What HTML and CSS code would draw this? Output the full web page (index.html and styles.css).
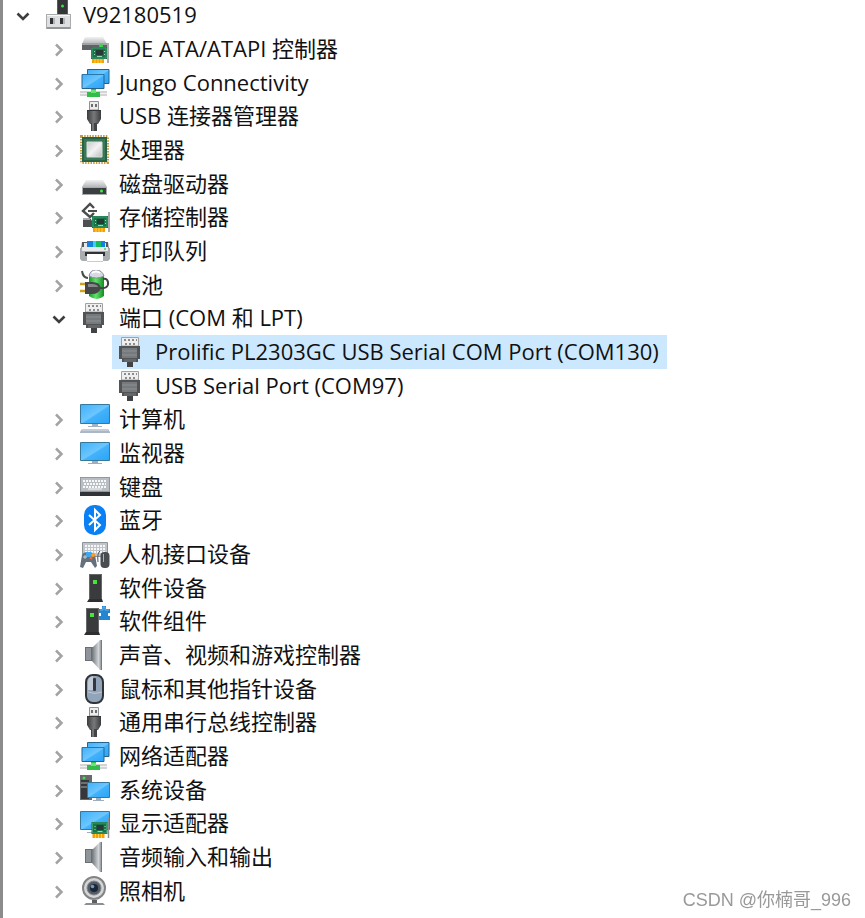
FILE: index.html
```html
<!DOCTYPE html>
<html lang="zh-CN">
<head>
<meta charset="utf-8">
<meta name="viewport" content="width=device-width, initial-scale=1">
<title>设备管理器</title>
<link rel="stylesheet" href="styles.css">
</head>
<body>
<svg class="defs" aria-hidden="true">
  <defs>
    <linearGradient id="blue" x1="0" y1="0" x2="1" y2="1"><stop offset="0" stop-color="#3fb0fa"/><stop offset=".5" stop-color="#6cc6ff"/><stop offset=".55" stop-color="#43b2fb"/><stop offset="1" stop-color="#2ba4f7"/></linearGradient>
    <linearGradient id="silver" x1="0" y1="0" x2="0" y2="1"><stop offset="0" stop-color="#f2f2f3"/><stop offset="1" stop-color="#b4b6b9"/></linearGradient>
    <linearGradient id="steel" x1="0" y1="0" x2="1" y2="0"><stop offset="0" stop-color="#70757a"/><stop offset=".65" stop-color="#d2d5d8"/><stop offset="1" stop-color="#7f858a"/></linearGradient>
    <linearGradient id="chip" x1="0" y1="0" x2="1" y2="1"><stop offset="0" stop-color="#c9c9c9"/><stop offset=".5" stop-color="#f3f3f3"/><stop offset="1" stop-color="#bdbdbd"/></linearGradient>
    <linearGradient id="dark" x1="0" y1="0" x2="1" y2="0"><stop offset="0" stop-color="#3b3c3d"/><stop offset=".5" stop-color="#77797a"/><stop offset="1" stop-color="#3b3c3d"/></linearGradient>
    <linearGradient id="cell" x1="0" y1="0" x2="1" y2="0"><stop offset="0" stop-color="#169529"/><stop offset=".45" stop-color="#62e36b"/><stop offset="1" stop-color="#138b24"/></linearGradient>
  </defs>
  <symbol id="open" viewBox="0 0 14 14"><path d="M1.500 4.500 7 10 12.500 4.500" fill="none" stroke="#3e3e3e" stroke-width="2.600"/></symbol>
  <symbol id="closed" viewBox="0 0 14 14"><path d="M4 1.500 9.500 7 4 12.500" fill="none" stroke="#a3a3a3" stroke-width="2.500"/></symbol>

  <symbol id="card" viewBox="0 0 18 20">
    <path d="M1 16h12v4H1z" fill="#f5a100"/><path d="M4 16v4M7 16v4M10 16v4" stroke="#ffd24c"/>
    <path d="M0 4h16v12H0z" fill="#19744a"/><path d="M1 5h14v10H1z" fill="none" stroke="#3d9a6c"/>
    <path d="M5 7h7v5H5z" fill="#263b35"/><path d="M3 8h1v1H3zM3 11h1v1H3zM13 8h1v1h-1zM13 11h1v1h-1zM6 13h5v1H6z" fill="#9ed7b4"/>
    <path d="M17 0v20" stroke="#8d9092" stroke-width="1.500"/>
  </symbol>
  <symbol id="root" viewBox="0 0 30 30">
    <path d="M13 0h11v15H13z" fill="#333536"/><path d="M13 0h1v15h-1zM23 0h1v15h-1z" fill="#595b5c"/><circle cx="18.500" cy="6" r="1.500" fill="#38df48"/>
    <path d="M2 14h25v15H2z" fill="#a9abad"/><path d="M3 15h23v12H3z" fill="#dedfe2"/><path d="M3 15h23v1H3z" fill="#f7f7f8"/>
    <path d="M6 18h3v6H6zM16 18h3v6h-3z" fill="#303133"/><path d="M9 18h2v6H9zM19 18h2v6h-2z" fill="#b2b4b7"/><path d="M3 27h23v2H3z" fill="#939598"/>
  </symbol>
  <symbol id="ide" viewBox="0 0 30 30">
    <path d="M5 3h18l4 7H2z" fill="url(#silver)"/><path d="M2 9h25v7H2z" fill="#606366"/><path d="M2 9h25v2H2z" fill="#a0a3a5"/>
    <circle cx="21" cy="12" r="2" fill="#36dc45"/><use href="#card" x="11" y="9" width="18" height="20"/>
  </symbol>
  <symbol id="network" viewBox="0 0 30 30">
    <path d="M7.500 1.500h21.500v14H7.500z" fill="url(#blue)" stroke="#25658d"/><path d="M2 6.500h22v14H2z" fill="url(#blue)" stroke="#25658d"/>
    <path d="M2 6.500h22" stroke="#2777a8"/><path d="M0 23h27v5H0z" fill="#d2d4d5"/><path d="M0 25h27v1H0z" fill="#f1f1f1"/>
    <path d="M11 21h5v3h4v5H7v-5h4z" fill="#32bc49"/><path d="M11 22h5v3h-5z" fill="#6ae476"/>
  </symbol>
  <symbol id="usb" viewBox="0 0 30 30">
    <path d="M9.500.500h9V9h-9z" fill="#ececed" stroke="#909193"/><path d="M11 3h2v3h-2zM15 3h2v3h-2z" fill="#6d6e70"/>
    <path d="M7 9h14v9l-3 5h-8l-3-5z" fill="url(#dark)"/><path d="M7 9h14v1H7z" fill="#343536"/><path d="M11 22h6v8h-6z" fill="#434446"/><path d="M12 22h2v8h-2z" fill="#737476"/>
  </symbol>
  <symbol id="cpu" viewBox="0 0 30 30">
    <path d="M1.500 1.500h26v26h-26z" fill="none" stroke="#c49b44" stroke-width="3" stroke-dasharray="1.500 1.200"/>
    <path d="M2 2h25v25H2z" fill="#286247"/><path d="M4 4h21v21H4z" fill="#397858"/><path d="M7 7h15v15H7z" fill="url(#chip)" stroke="#d7e3dc"/>
  </symbol>
  <symbol id="disk" viewBox="0 0 30 30">
    <path d="M6 11h17l4 7H2z" fill="url(#silver)"/><path d="M2 18h25v8H2z" fill="#a8acae"/><path d="M3 19h23v6H3z" fill="#3c3f41"/><circle cx="21.500" cy="22" r="1.500" fill="#3eef4b"/>
  </symbol>
  <symbol id="storage" viewBox="0 0 30 30">
    <path d="M3 17h8l4 8H3z" fill="#4d5052"/><path d="M3 16h7v2H3z" fill="#a8aaac"/>
    <path d="M14 6 10 2 3 9l7 6 4-4" fill="none" stroke="#4a4c4e" stroke-width="2.400"/><path d="M8 9h9" fill="none" stroke="#4a4c4e" stroke-width="2"/>
    <use href="#card" x="12" y="10" width="18" height="20"/>
  </symbol>
  <symbol id="printer" viewBox="0 0 30 30">
    <path d="M2 6h26l1 9H1z" fill="#55595c"/><path d="M4 7h22v6H4z" fill="#e5e8e9"/><path d="M7 5h18v6H7z" fill="#1681df"/><path d="M13 5h3v6h-3z" fill="#43cdf6"/><path d="M16 5h5v6h-5z" fill="#16bc5e"/>
    <path d="M0 12h30v11l-2 2H2l-2-2z" fill="#a9adaf"/><path d="M2 11h26v4H2z" fill="#e7e9ea"/><circle cx="25" cy="13" r="1" fill="#4bd44e"/>
    <path d="M5 16h20v4H5z" fill="#303335"/><path d="M7 18h16v8H7z" fill="#fff"/><path d="M7 25h16v1H7z" fill="#ccc"/>
  </symbol>
  <symbol id="battery" viewBox="0 0 30 30">
    <path d="M9 5q6-6 15 0v21q-7 6-15 0z" fill="url(#cell)"/><path d="M9 6q1-6 7-6t8 6q-8 4-15 0z" fill="#d8d8e4" stroke="#8e8ea3"/><path d="M12 3q4-3 8 0" stroke="#fff" stroke-width="2" fill="none"/>
    <path d="M2 1q1 7 6 7" stroke="#494b4c" stroke-width="2" fill="none"/>
    <path d="M20 18q9 1 8-6-1-4-5-3" stroke="#414344" stroke-width="2" fill="none"/><path d="M0 14h7M0 21h7" stroke="#d0a218" stroke-width="2.500"/>
    <path d="M5 12h7q8 0 9 6-2 6-9 6H5z" fill="#454749"/><path d="M8 14h5q5 1 5 3H8z" fill="#858789"/>
  </symbol>
  <symbol id="port" viewBox="0 0 30 30">
    <path d="M5.500.500h17V9h-17z" fill="#efeff0" stroke="#a0a2a4"/><path d="M8 2h2v2H8zM12 2h2v2h-2zM16 2h2v2h-2zM20 2h1v2h-1zM9 6h2v2H9zM13 6h2v2h-2zM17 6h2v2h-2z" fill="#8b8d8f"/>
    <path d="M3 9h21v13h-2v3H6v-3H3z" fill="#515355"/><path d="M6 11h15v10H6z" fill="#777a7c"/><path d="M6 14h15M6 18h15" stroke="#8e9092"/><path d="M8 22h12v3H8z" fill="#646668"/><path d="M11 25h6v5h-6z" fill="#404244"/>
  </symbol>
  <symbol id="computer" viewBox="0 0 30 30">
    <path d="M.500.500h29v19H.500z" fill="url(#blue)" stroke="#37789d"/><path d="M12 20h6v2h4v1H8v-1h4z" fill="#a2b2c3"/><path d="M2 25h26l2 3v1H0v-1z" fill="#aab7c6"/><path d="M2 26h26" stroke="#dce2e8"/>
  </symbol>
  <symbol id="monitor" viewBox="0 0 30 30"><path d="M.500 4.500h29v18H.500z" fill="url(#blue)" stroke="#37789d"/><path d="M12 23h6v2h4v1H8v-1h4z" fill="#9dafbf"/></symbol>
  <symbol id="keyboard" viewBox="0 0 30 30">
    <path d="M0 5h30v19H0z" fill="#91989e"/><path d="M1 6h28v13H1z" fill="#b8bec3"/><path d="M3 9h24M4 12h22M3 15h24" stroke="#f8f8f8" stroke-width="2" stroke-dasharray="2 1"/><path d="M8 17h14" stroke="#f6f6f6"/><path d="M0 20h30v4H0z" fill="#303437"/>
  </symbol>
  <symbol id="bluetooth" viewBox="0 0 30 30"><rect x="4" width="22" height="30" rx="10" fill="#0a80f5"/><path d="m9 10 11 10-5 5V5l5 5L9 20" fill="none" stroke="#fff" stroke-width="2"/></symbol>
  <symbol id="hid" viewBox="0 0 30 30">
    <path d="M2.500 3.500h25v14h-25z" fill="#c0c4c8" stroke="#8d949a"/><path d="M5 7h20M5 10h20M5 13h20" stroke="#f6f7f8" stroke-width="2" stroke-dasharray="2 1"/>
    <path d="M2 16q2-4 6-2 4-2 7 2l2 11-2 2-4-6H6l-3 6-3-1z" fill="#64717d"/><path d="M6 13h5v5H6z" fill="#3aa8f2"/><circle cx="13" cy="16" r="2" fill="#ff9d22"/><circle cx="11" cy="19" r="1.500" fill="#ef6a34"/><path d="M3 18h4M5 16v4" stroke="#c8cdd1"/>
    <rect x="20.500" y="13" width="9" height="16" rx="4" fill="#494d51"/><path d="M23 15h1v8h-1z" fill="#acb4bb"/><path d="M20 12q-3 2-2 11" fill="none" stroke="#505458"/>
  </symbol>
  <symbol id="tower" viewBox="0 0 30 30"><path d="M9 1h13v26H9z" fill="#656769"/><path d="M10 2h11v25H10z" fill="#393b3d"/><path d="M13 7h4v4h-4z" fill="#47e43e"/><path d="M9 26h13l1 3H7z" fill="#2d2f31"/></symbol>
  <symbol id="component" viewBox="0 0 30 30">
    <path d="M6 2h13v25H6z" fill="#656769"/><path d="M7 3h11v24H7z" fill="#393b3d"/><path d="M10 7h4v4h-4z" fill="#47e43e"/><path d="M6 26h13l1 3H4z" fill="#2d2f31"/>
    <path d="M19 3h3V0h4v3h4v4h-2v3h2v4H19v-4h2V7h-2z" fill="#2585ce"/><path d="M20 4h3V1h2v3h4" fill="none" stroke="#66b3e4"/>
  </symbol>
  <symbol id="speaker" viewBox="0 0 30 30"><path d="M5 7h9v14H5z" fill="#686e73"/><path d="M6 8h5v12H6z" fill="#8e9499"/><path d="m12 8 8-8h2v30h-2l-8-9z" fill="url(#steel)"/><path d="M21.500 0v30" stroke="#757b80"/></symbol>
  <symbol id="mouse" viewBox="0 0 30 30"><rect x="6" y="1" width="17" height="28" rx="7" fill="#92a4b9" stroke="#303439" stroke-width="2"/><path d="M8 16V8q0-5 5-6v14z" fill="#c1cbd7"/><path d="M8 18q7 3 14 0" stroke="#bdc7d2" fill="none"/><rect x="13" y="4" width="3" height="13" rx="1" fill="#34383d"/></symbol>
  <symbol id="system" viewBox="0 0 30 30">
    <path d="M0 0h12v25H0z" fill="#666a6e"/><path d="M1 5h8v19H1z" fill="#353739"/><path d="M1 8h8M1 12h7" stroke="#a5a7a8"/><circle cx="4" cy="3" r="1.500" fill="#41db50"/>
    <path d="M7.500 7.500h22v15h-22z" fill="url(#blue)" stroke="#37789d"/><path d="M16 23h5v2h3v1H13v-1h3z" fill="#9dafbf"/>
  </symbol>
  <symbol id="display" viewBox="0 0 30 30"><path d="M.500 3.500h29v18H.500z" fill="url(#blue)" stroke="#37789d"/><path d="M7 24h9v1H7z" fill="#9dafbf"/><use href="#card" x="11" y="10" width="19" height="20"/></symbol>
  <symbol id="camera" viewBox="0 0 30 30">
    <circle cx="14" cy="12" r="11" fill="#d4d5d6" stroke="#818385" stroke-width="2"/><circle cx="14" cy="12" r="7" fill="#555b62" stroke="#85898d"/><circle cx="14" cy="12" r="4" fill="#192638"/><circle cx="12.500" cy="10.500" r="1.800" fill="#7299ba"/>
    <path d="M12 24h5v3h-5z" fill="#5d5f61"/><path d="M6 27h17l2 2H4z" fill="#8c8e90"/>
  </symbol>
</svg>

<main class="pane">
  <ul class="tree" role="tree" aria-label="设备">
    <li class="row" role="treeitem" aria-level="1" aria-expanded="true"><button class="toggle" aria-label="折叠"><svg><use href="#open"/></svg></button><span class="item"><svg><use href="#root"/></svg>V92180519</span></li>
    <li class="row child" role="treeitem" aria-level="2"><button class="toggle" aria-label="展开"><svg><use href="#closed"/></svg></button><span class="item"><svg><use href="#ide"/></svg>IDE ATA/ATAPI 控制器</span></li>
    <li class="row child" role="treeitem" aria-level="2"><button class="toggle" aria-label="展开"><svg><use href="#closed"/></svg></button><span class="item"><svg><use href="#network"/></svg>Jungo Connectivity</span></li>
    <li class="row child" role="treeitem" aria-level="2"><button class="toggle" aria-label="展开"><svg><use href="#closed"/></svg></button><span class="item"><svg><use href="#usb"/></svg>USB 连接器管理器</span></li>
    <li class="row child" role="treeitem" aria-level="2"><button class="toggle" aria-label="展开"><svg><use href="#closed"/></svg></button><span class="item"><svg><use href="#cpu"/></svg>处理器</span></li>
    <li class="row child" role="treeitem" aria-level="2"><button class="toggle" aria-label="展开"><svg><use href="#closed"/></svg></button><span class="item"><svg><use href="#disk"/></svg>磁盘驱动器</span></li>
    <li class="row child" role="treeitem" aria-level="2"><button class="toggle" aria-label="展开"><svg><use href="#closed"/></svg></button><span class="item"><svg><use href="#storage"/></svg>存储控制器</span></li>
    <li class="row child" role="treeitem" aria-level="2"><button class="toggle" aria-label="展开"><svg><use href="#closed"/></svg></button><span class="item"><svg><use href="#printer"/></svg>打印队列</span></li>
    <li class="row child" role="treeitem" aria-level="2"><button class="toggle" aria-label="展开"><svg><use href="#closed"/></svg></button><span class="item"><svg><use href="#battery"/></svg>电池</span></li>
    <li class="row child" role="treeitem" aria-level="2" aria-expanded="true"><button class="toggle" aria-label="折叠"><svg><use href="#open"/></svg></button><span class="item"><svg><use href="#port"/></svg>端口 (COM 和 LPT)</span></li>
    <li class="row leaf" role="treeitem" aria-level="3" aria-selected="true"><span class="item selected"><svg><use href="#port"/></svg>Prolific PL2303GC USB Serial COM Port (COM130)</span></li>
    <li class="row leaf" role="treeitem" aria-level="3"><span class="item"><svg><use href="#port"/></svg>USB Serial Port (COM97)</span></li>
    <li class="row child" role="treeitem" aria-level="2"><button class="toggle" aria-label="展开"><svg><use href="#closed"/></svg></button><span class="item"><svg><use href="#computer"/></svg>计算机</span></li>
    <li class="row child" role="treeitem" aria-level="2"><button class="toggle" aria-label="展开"><svg><use href="#closed"/></svg></button><span class="item"><svg><use href="#monitor"/></svg>监视器</span></li>
    <li class="row child" role="treeitem" aria-level="2"><button class="toggle" aria-label="展开"><svg><use href="#closed"/></svg></button><span class="item"><svg><use href="#keyboard"/></svg>键盘</span></li>
    <li class="row child" role="treeitem" aria-level="2"><button class="toggle" aria-label="展开"><svg><use href="#closed"/></svg></button><span class="item"><svg><use href="#bluetooth"/></svg>蓝牙</span></li>
    <li class="row child" role="treeitem" aria-level="2"><button class="toggle" aria-label="展开"><svg><use href="#closed"/></svg></button><span class="item"><svg><use href="#hid"/></svg>人机接口设备</span></li>
    <li class="row child" role="treeitem" aria-level="2"><button class="toggle" aria-label="展开"><svg><use href="#closed"/></svg></button><span class="item"><svg><use href="#tower"/></svg>软件设备</span></li>
    <li class="row child" role="treeitem" aria-level="2"><button class="toggle" aria-label="展开"><svg><use href="#closed"/></svg></button><span class="item"><svg><use href="#component"/></svg>软件组件</span></li>
    <li class="row child" role="treeitem" aria-level="2"><button class="toggle" aria-label="展开"><svg><use href="#closed"/></svg></button><span class="item"><svg><use href="#speaker"/></svg>声音、视频和游戏控制器</span></li>
    <li class="row child" role="treeitem" aria-level="2"><button class="toggle" aria-label="展开"><svg><use href="#closed"/></svg></button><span class="item"><svg><use href="#mouse"/></svg>鼠标和其他指针设备</span></li>
    <li class="row child" role="treeitem" aria-level="2"><button class="toggle" aria-label="展开"><svg><use href="#closed"/></svg></button><span class="item"><svg><use href="#usb"/></svg>通用串行总线控制器</span></li>
    <li class="row child" role="treeitem" aria-level="2"><button class="toggle" aria-label="展开"><svg><use href="#closed"/></svg></button><span class="item"><svg><use href="#network"/></svg>网络适配器</span></li>
    <li class="row child" role="treeitem" aria-level="2"><button class="toggle" aria-label="展开"><svg><use href="#closed"/></svg></button><span class="item"><svg><use href="#system"/></svg>系统设备</span></li>
    <li class="row child" role="treeitem" aria-level="2"><button class="toggle" aria-label="展开"><svg><use href="#closed"/></svg></button><span class="item"><svg><use href="#display"/></svg>显示适配器</span></li>
    <li class="row child" role="treeitem" aria-level="2"><button class="toggle" aria-label="展开"><svg><use href="#closed"/></svg></button><span class="item"><svg><use href="#speaker"/></svg>音频输入和输出</span></li>
    <li class="row child" role="treeitem" aria-level="2"><button class="toggle" aria-label="展开"><svg><use href="#closed"/></svg></button><span class="item"><svg><use href="#camera"/></svg>照相机</span></li>
  </ul>
  <div class="watermark">CSDN @你楠哥_996</div>
</main>
</body>
</html>
```

FILE: styles.css
```css
* {
  box-sizing: border-box;
}

body {
  margin: 0;
  background: #fff;
  color: #111;
  font-family: "Open Sans", "Noto Sans CJK SC", sans-serif;
  font-size: 22px;
}

.defs {
  position: absolute;
  width: 0;
  height: 0;
}

.pane {
  min-height: 100vh;
  border-left: 3px solid #8c8c8c;
  overflow: hidden;
}

.tree {
  list-style: none;
  margin: -2px 0 0;
  padding: 0 0 0 3px;
}

.row {
  display: flex;
  height: 34px;
  line-height: 32px;
  white-space: nowrap;
}

/* Two rows of 34px, then one of 33px */
.row:nth-child(3n) {
  height: 33px;
}

.child {
  padding-left: 36px;
}

.leaf {
  padding-left: 106px;
}

.toggle {
  display: flex;
  align-items: center;
  justify-content: center;
  width: 34px;
  padding: 2px 0 0;
  border: 0;
  background: none;
}

.toggle svg {
  width: 14px;
  height: 14px;
}

.item {
  display: flex;
  align-items: flex-start;
  gap: 9px;
  padding: 0 8px 0 4px;
}

.item svg {
  flex: none;
  width: 30px;
  height: 30px;
  margin-top: 2px;
}

.selected {
  background: #cce8ff;
}

.watermark {
  position: fixed;
  right: 14px;
  bottom: 6px;
  color: #999;
  font-family: "Liberation Sans", "Noto Sans CJK SC", sans-serif;
  font-size: 18px;
  line-height: 24px;
}
```
